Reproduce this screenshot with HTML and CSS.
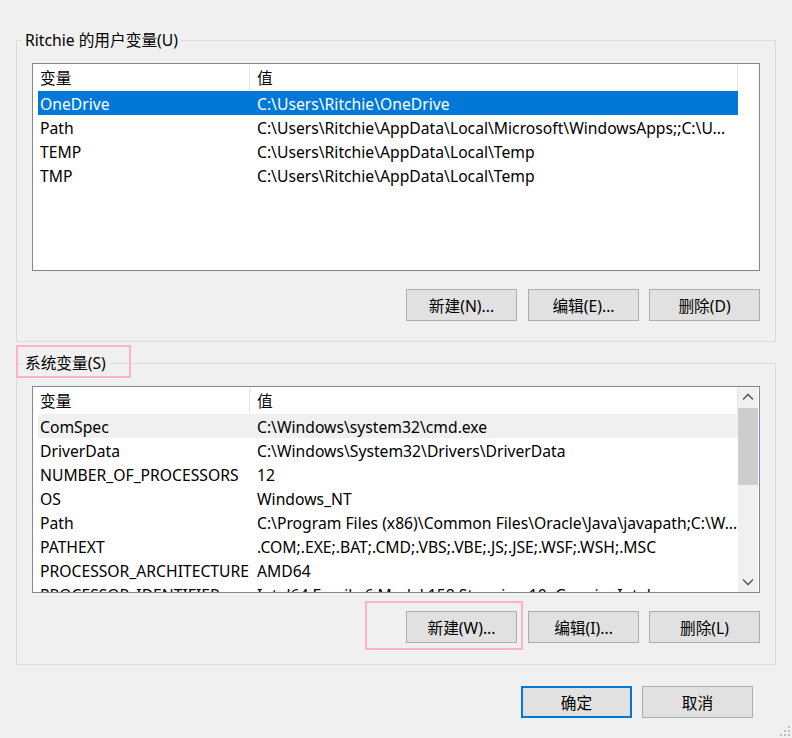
FILE: index.html
```html
<!DOCTYPE html>
<html>
<head>
<meta charset="utf-8">
<title>环境变量</title>
<link rel="stylesheet" href="styles.css">
</head>
<body>
<div class="dialog">
	<fieldset class="group">
		<legend>Ritchie 的用户变量(U)</legend>
		<div class="list">
			<div class="list-body">
				<div class="list-head"><span class="c1">变量</span><span class="c2">值</span></div>
				<div class="row selected"><span class="c1">OneDrive</span><span class="c2">C:\Users\Ritchie\OneDrive</span></div>
				<div class="row"><span class="c1">Path</span><span class="c2">C:\Users\Ritchie\AppData\Local\Microsoft\WindowsApps;;C:\U...</span></div>
				<div class="row"><span class="c1">TEMP</span><span class="c2">C:\Users\Ritchie\AppData\Local\Temp</span></div>
				<div class="row"><span class="c1">TMP</span><span class="c2">C:\Users\Ritchie\AppData\Local\Temp</span></div>
			</div>
		</div>
		<div class="btn-row">
			<button class="btn">新建(N)...</button>
			<button class="btn">编辑(E)...</button>
			<button class="btn">删除(D)</button>
		</div>
	</fieldset>

	<fieldset class="group sys">
		<legend>系统变量(S)</legend>
		<div class="list short">
			<div class="list-body">
				<div class="list-head"><span class="c1">变量</span><span class="c2">值</span></div>
				<div class="row hover"><span class="c1">ComSpec</span><span class="c2">C:\Windows\system32\cmd.exe</span></div>
				<div class="row"><span class="c1">DriverData</span><span class="c2">C:\Windows\System32\Drivers\DriverData</span></div>
				<div class="row"><span class="c1">NUMBER_OF_PROCESSORS</span><span class="c2">12</span></div>
				<div class="row"><span class="c1">OS</span><span class="c2">Windows_NT</span></div>
				<div class="row"><span class="c1">Path</span><span class="c2">C:\Program Files (x86)\Common Files\Oracle\Java\javapath;C:\W...</span></div>
				<div class="row"><span class="c1">PATHEXT</span><span class="c2">.COM;.EXE;.BAT;.CMD;.VBS;.VBE;.JS;.JSE;.WSF;.WSH;.MSC</span></div>
				<div class="row"><span class="c1">PROCESSOR_ARCHITECTURE</span><span class="c2">AMD64</span></div>
				<div class="row"><span class="c1">PROCESSOR_IDENTIFIER</span><span class="c2">Intel64 Family 6 Model 158 Stepping 10, GenuineIntel</span></div>
			</div>
			<div class="scrollbar">
				<div class="sb-arrow"><svg width="20" height="20" viewBox="0 0 20 20"><polyline points="5,12.5 10,7.5 15,12.5" fill="none" stroke="#606060" stroke-width="1.6"/></svg></div>
				<div class="sb-track"><div class="sb-thumb"></div></div>
				<div class="sb-arrow"><svg width="20" height="20" viewBox="0 0 20 20"><polyline points="5,7.5 10,12.5 15,7.5" fill="none" stroke="#606060" stroke-width="1.6"/></svg></div>
			</div>
		</div>
		<div class="btn-row">
			<button class="btn">新建(W)...</button>
			<button class="btn">编辑(I)...</button>
			<button class="btn">删除(L)</button>
		</div>
	</fieldset>

	<div class="footer">
		<button class="btn default">确定</button>
		<button class="btn">取消</button>
	</div>
</div>

<div class="mark mark-legend"></div>
<div class="mark mark-new"></div>

<svg class="grip" width="14" height="14" viewBox="0 0 14 14">
	<rect x="10" y="2" width="2" height="2" fill="#bdbdbd"/>
	<rect x="6" y="6" width="2" height="2" fill="#bdbdbd"/>
	<rect x="10" y="6" width="2" height="2" fill="#bdbdbd"/>
	<rect x="2" y="10" width="2" height="2" fill="#bdbdbd"/>
	<rect x="6" y="10" width="2" height="2" fill="#bdbdbd"/>
	<rect x="10" y="10" width="2" height="2" fill="#bdbdbd"/>
</svg>
</body>
</html>
```

FILE: styles.css
```css
html, body
{
	margin:0;
	padding:0;
}
body
{
	width:792px;
	height:738px;
	overflow:hidden;
	position:relative;
	background:#f0f0f0;
	font-family:"Noto Sans", "Noto Sans CJK SC", sans-serif;
	font-size:15.7px;
	color:#000;
}
.dialog
{
	padding-top:30px;
}
.group
{
	box-sizing:border-box;
	width:760px;
	margin:0 0 0 16px;
	padding:13px 14px 20px 15px;
	border:1px solid #dcdcdc;
	min-width:0;
}
.group legend
{
	padding:0 3px;
	margin-left:-10px;
	line-height:20px;
}
.sys
{
	margin-top:11px;
	padding-bottom:21px;
}
.list
{
	box-sizing:border-box;
	width:728px;
	height:208px;
	border:1px solid #828790;
	background:#fff;
	display:flex;
	overflow:hidden;
}
.list.short
{
	height:207px;
}
.list-body
{
	width:700px;
	padding-left:5px;
	overflow:hidden;
	white-space:nowrap;
}
.list-head
{
	height:27px;
	line-height:27px;
	padding-top:1px;
	display:flex;
	border-right:1px solid #e5e5e5;
	box-sizing:border-box;
}
.list-head .c1
{
	height:26px;
	border-right:1px solid #e5e5e5;
	box-sizing:border-box;
}
.row
{
	height:24px;
	line-height:24px;
	padding-top:1px;
	box-sizing:border-box;
	display:flex;
}
.c1
{
	width:212px;
	padding-left:2px;
	box-sizing:border-box;
	flex:none;
}
.c2
{
	padding-left:7px;
	overflow:hidden;
}
.row.selected
{
	background:#0078d7;
	color:#fff;
}
.row.hover
{
	background:#f0f0f0;
}
.scrollbar
{
	width:20px;
	background:#f0f0f0;
	display:flex;
	flex-direction:column;
}
.sb-arrow
{
	height:20px;
}
.sb-arrow svg
{
	display:block;
}
.sb-track
{
	flex:1;
	padding-top:1px;
}
.sb-thumb
{
	height:77px;
	background:#cdcdcd;
}
.btn-row
{
	display:flex;
	justify-content:flex-end;
	gap:10px;
	margin-top:18px;
	width:728px;
}
.btn-row .btn:first-child
{
	margin-right:1px;
}
.btn
{
	width:111px;
	height:32px;
	box-sizing:border-box;
	background:#e1e1e1;
	border:1px solid #adadad;
	font-family:"Noto Sans", "Noto Sans CJK SC", sans-serif;
	font-size:15.7px;
	color:#000;
	padding:0;
}
.btn.default
{
	border:2px solid #0078d7;
}
.footer
{
	display:flex;
	justify-content:flex-end;
	gap:10px;
	margin-top:21px;
	padding-right:39px;
}
.mark
{
	position:absolute;
	box-sizing:border-box;
	border:2px solid #fbb3c9;
}
.mark-legend
{
	left:16px;
	top:345px;
	width:115px;
	height:33px;
}
.mark-new
{
	left:365px;
	top:601px;
	width:158px;
	height:49px;
}
.grip
{
	position:absolute;
	right:0;
	bottom:0;
}
```
